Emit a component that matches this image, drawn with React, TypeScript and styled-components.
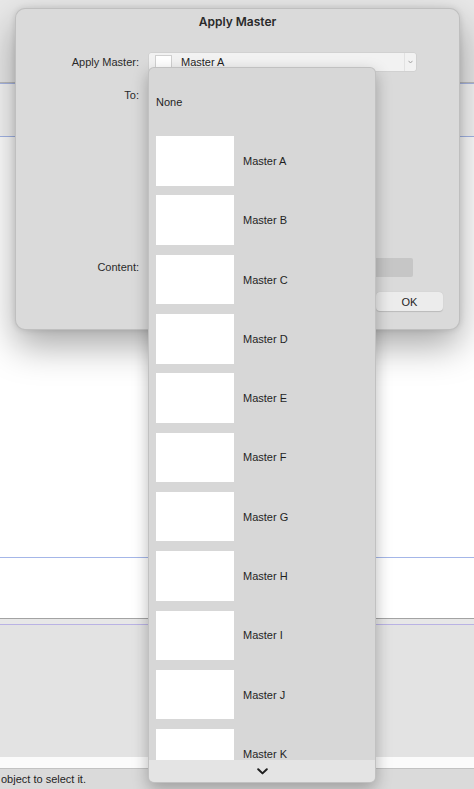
import React from "react";
import styled, { createGlobalStyle } from "styled-components";

const GlobalStyle = createGlobalStyle`
    html, body {
        margin: 0;
        padding: 0;
        background: #ffffff;
    }
    body {
        font-family: "Liberation Sans", Arial, sans-serif;
        color: #1f1f1f;
    }
`

const Screen = styled.div`
    position: relative;
    width: 474px;
    height: 789px;
    overflow: hidden;
    display: flex;
    flex-direction: column;
`

const Band = styled.div<{ $h: number; $bg: string }>`
    height: ${p => p.$h}px;
    background: ${p => p.$bg};
    flex-shrink: 0;
`

const Rule = styled.div<{ $color: string }>`
    height: 1px;
    background: ${p => p.$color};
    flex-shrink: 0;
`

const StatusBar = styled.div`
    height: 20px;
    flex-shrink: 0;
    border-top: 1px solid #c2c2c2;
    background: #dadada;
    font-size: 11px;
    line-height: 20px;
    padding-left: 1px;
    white-space: nowrap;
    overflow: hidden;
`

const Dialog = styled.div`
    position: absolute;
    left: 15px;
    top: 8px;
    width: 445px;
    height: 322px;
    box-sizing: border-box;
    border-radius: 10px;
    background: #dadada;
    border: 1px solid rgba(0, 0, 0, 0.12);
    box-shadow: 0 16px 36px rgba(0, 0, 0, 0.34), 0 0 6px rgba(0, 0, 0, 0.12);
    display: flex;
    flex-direction: column;
`

const Title = styled.div`
    margin-top: 5px;
    height: 16px;
    line-height: 16px;
    text-align: center;
    font-family: Inter, "Liberation Sans", sans-serif;
    font-size: 12px;
    font-weight: 600;
    color: #2a2a2a;
`

const Form = styled.div`
    margin-top: 23px;
    display: grid;
    grid-template-columns: 123px 267px;
    column-gap: 10px;
    row-gap: 15px;
`

const Label = styled.div`
    text-align: right;
    font-size: 11px;
    line-height: 18px;
    height: 18px;
    color: #2a2a2a;
`

const Select = styled.div`
    height: 18px;
    display: flex;
    align-items: center;
    background: #f2f2f2;
    border-radius: 2px;
    box-shadow: 0 0 0 0.5px rgba(0, 0, 0, 0.08);
    font-size: 11px;
`

const Swatch = styled.div`
    width: 17px;
    height: 15px;
    margin: 0 9px 0 6px;
    background: #ffffff;
    border: 1px solid #d0d0d0;
    box-sizing: border-box;
`

const SelectText = styled.span`
    flex: 1;
`

const SelectArrow = styled.div`
    width: 11px;
    height: 18px;
    border-left: 1px solid #e2e2e2;
    display: flex;
    align-items: center;
    justify-content: center;
`

const ToOptions = styled.div`
    height: 157px;
`

const ContentBar = styled.div`
    width: 264px;
    height: 19px;
    background: #c6c6c6;
    border-radius: 2px;
`

const Buttons = styled.div`
    margin-top: 15px;
    padding-right: 16px;
    display: flex;
    justify-content: flex-end;
`

const Button = styled.button`
    width: 67px;
    height: 19px;
    border: 0;
    border-radius: 4px;
    background: #ececec;
    box-shadow: 0 0.5px 1px rgba(0, 0, 0, 0.15);
    font-family: inherit;
    font-size: 11px;
    color: #1f1f1f;
    padding: 0;
`

const Popup = styled.div`
    position: absolute;
    left: 148px;
    top: 67px;
    width: 228px;
    height: 716px;
    box-sizing: border-box;
    padding-top: 4px;
    border-radius: 6px;
    background: #d7d7d7;
    border: 1px solid rgba(0, 0, 0, 0.1);
    box-shadow: 0 6px 16px rgba(0, 0, 0, 0.28);
    display: flex;
    flex-direction: column;
    overflow: hidden;
`

const List = styled.div`
    flex: 1;
    overflow: hidden;
`

const Item = styled.div`
    height: 59.3px;
    display: flex;
    align-items: center;
    gap: 9px;
    padding-left: 7px;
    font-size: 11px;
    flex-shrink: 0;
`

const Thumb = styled.div`
    width: 78px;
    height: 49.5px;
    background: #ffffff;
    flex-shrink: 0;
`

const ScrollFooter = styled.div`
    height: 22px;
    flex-shrink: 0;
    background: #e4e4e4;
    display: flex;
    align-items: center;
    justify-content: center;
`

const masters = ["A", "B", "C", "D", "E", "F", "G", "H", "I", "J", "K"];

export default function App() {
    return (
        <>
            <GlobalStyle />
            <Screen>
                <Band $h={82} $bg="#e8e8e8" />
                <Rule $color="#bdbdbd" />
                <Rule $color="#a9b8e6" />
                <Band $h={52} $bg="#f6f6f6" />
                <Rule $color="#a4b6e8" />
                <Band $h={420} $bg="#ffffff" />
                <Rule $color="#a4b6e8" />
                <Band $h={60} $bg="#ffffff" />
                <Rule $color="#a3a3a3" />
                <Band $h={5} $bg="#e7e7e7" />
                <Rule $color="#b9b2e4" />
                <Band $h={132} $bg="#e3e3e3" />
                <Band $h={11} $bg="#fbfbfb" />
                <StatusBar>object to select it.</StatusBar>

                <Dialog>
                    <Title>Apply Master</Title>
                    <Form>
                        <Label>Apply Master:</Label>
                        <Select>
                            <Swatch />
                            <SelectText>Master A</SelectText>
                            <SelectArrow>
                                <svg width="5" height="4" viewBox="0 0 5 4">
                                    <polyline points="0.5,0.8 2.5,3 4.5,0.8" fill="none" stroke="#9a9a9a" strokeWidth="0.9" />
                                </svg>
                            </SelectArrow>
                        </Select>
                        <Label>To:</Label>
                        <ToOptions />
                        <Label>Content:</Label>
                        <ContentBar />
                    </Form>
                    <Buttons>
                        <Button>OK</Button>
                    </Buttons>
                </Dialog>

                <Popup>
                    <List>
                        <Item>None</Item>
                        {masters.map(m => (
                            <Item key={m}>
                                <Thumb />
                                Master {m}
                            </Item>
                        ))}
                    </List>
                    <ScrollFooter>
                        <svg width="11" height="7" viewBox="0 0 11 7">
                            <polyline points="1.2,1.2 5.5,5.4 9.8,1.2" fill="none" stroke="#1f1f1f" strokeWidth="2" strokeLinecap="round" strokeLinejoin="round" />
                        </svg>
                    </ScrollFooter>
                </Popup>
            </Screen>
        </>
    );
}
